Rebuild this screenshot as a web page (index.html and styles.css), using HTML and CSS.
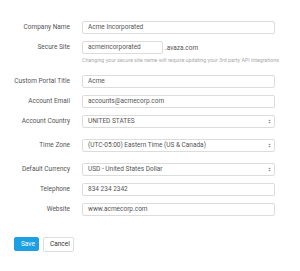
FILE: index.html
```html
<!DOCTYPE html>
<html>
<head>
	<title>Account Settings</title>
	<link rel="stylesheet" href="styles.css">
</head>
<body>
<form class="settings">
	<div class="row">
		<label>Company Name</label>
		<div class="field"><div class="box">Acme Incorporated</div></div>
	</div>
	<div class="row">
		<label>Secure Site</label>
		<div class="field">
			<div class="site">
				<div class="box short">acmeincorporated</div>
				<span class="suffix">.avaza.com</span>
			</div>
			<p class="hint">Changing your secure site name will require updating your 3rd party API integrations</p>
		</div>
	</div>
	<div class="row">
		<label>Custom Portal Title</label>
		<div class="field"><div class="box">Acme</div></div>
	</div>
	<div class="row">
		<label>Account Email</label>
		<div class="field"><div class="box">accounts@acmecorp.com</div></div>
	</div>
	<div class="row wide">
		<label>Account Country</label>
		<div class="field"><div class="box select">UNITED STATES<svg class="arrows" viewBox="0 0 6 10"><path d="M3 1 L5.5 4 H0.5 Z M3 9 L5.5 6 H0.5 Z"/></svg></div></div>
	</div>
	<div class="row wide">
		<label>Time Zone</label>
		<div class="field"><div class="box select">(UTC-05:00) Eastern Time (US &amp; Canada)<svg class="arrows" viewBox="0 0 6 10"><path d="M3 1 L5.5 4 H0.5 Z M3 9 L5.5 6 H0.5 Z"/></svg></div></div>
	</div>
	<div class="row">
		<label>Default Currency</label>
		<div class="field"><div class="box select">USD - United States Dollar<svg class="arrows" viewBox="0 0 6 10"><path d="M3 1 L5.5 4 H0.5 Z M3 9 L5.5 6 H0.5 Z"/></svg></div></div>
	</div>
	<div class="row">
		<label>Telephone</label>
		<div class="field"><div class="box">834 234 2342</div></div>
	</div>
	<div class="row">
		<label>Website</label>
		<div class="field"><div class="box">www.acmecorp.com</div></div>
	</div>
	<div class="actions">
		<button type="button" class="btn primary">Save</button>
		<button type="button" class="btn">Cancel</button>
	</div>
</form>
</body>
</html>
```

FILE: styles.css
```css
body{
	margin: 0;
	background: #fff;
	font-family: Roboto, "Liberation Sans", sans-serif;
	color: #555;
}

.settings{
	padding: 21px 25px 0 0;
}

.row{
	display: flex;
	align-items: flex-start;
	margin-bottom: 7px;
}

.row.wide{
	margin-bottom: 11px;
}

label{
	width: 70px;
	flex: none;
	text-align: right;
	font-size: 6.5px;
	line-height: 13px;
	margin-right: 12px;
}

.field{
	flex: 1;
}

.box{
	height: 13px;
	box-sizing: border-box;
	border: 1px solid #dcdcdc;
	border-radius: 2px;
	padding: 0 5px;
	font-size: 6.5px;
	line-height: 11px;
	color: #555;
	position: relative;
}

.box.short{
	width: 81px;
}

.site{
	display: flex;
	align-items: center;
}

.suffix{
	font-size: 6.5px;
	color: #555;
	margin-left: 2px;
}

.hint{
	margin: 3px 0 4px;
	font-size: 5.3px;
	line-height: 7px;
	color: #aaa;
	white-space: nowrap;
}

.arrows{
	position: absolute;
	right: 3px;
	top: 3px;
	width: 3px;
	height: 5px;
	fill: #888;
}

.actions{
	display: flex;
	gap: 4px;
	padding: 14px 0 0 14px;
}

.btn{
	height: 14px;
	padding: 0 6px;
	border: 1px solid #ddd;
	border-radius: 2px;
	background: #fff;
	font-family: inherit;
	font-size: 6.5px;
	color: #333;
}

.btn.primary{
	width: 25px;
	background: #1d9fe4;
	border-color: #1d9fe4;
	color: #fff;
}

.btn:not(.primary){
	width: 31px;
	height: 15px;
	margin-top: -0.5px;
}
```
